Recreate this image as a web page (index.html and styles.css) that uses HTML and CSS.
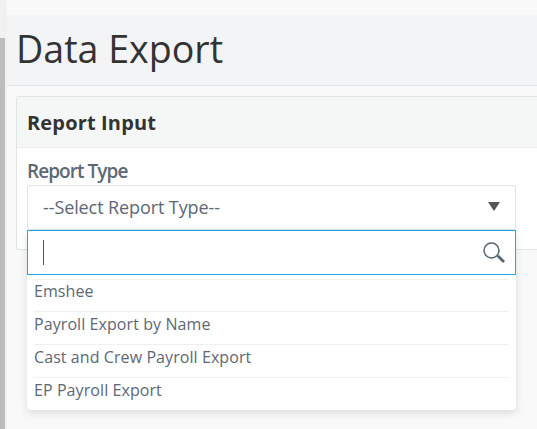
FILE: index.html
```html
<!DOCTYPE html>
<html lang="en">
<head>
    <meta charset="UTF-8">
    <meta name="viewport" content="width=device-width, initial-scale=1.0">
    <title>Data Export</title>
    <link rel="stylesheet" href="styles.css">
</head>
<body>

    <div class="scrollbar">
        <div class="scrollbar-thumb"></div>
    </div>

    <div class="main">
        <div class="top-bar"></div>

        <div class="page-header">
            <h1>Data Export</h1>
        </div>

        <div class="content">
            <div class="panel">
                <div class="panel-heading">Report Input</div>
                <div class="panel-body">
                    <label class="field-label">Report Type</label>
                    <div class="select-wrap">
                        <div class="select-box">
                            <span>--Select Report Type--</span>
                            <span class="select-arrow"></span>
                        </div>

                        <div class="dropdown">
                            <div class="search-box">
                                <span class="caret"></span>
                                <svg class="search-icon" width="24" height="24" viewBox="0 0 24 24">
                                    <circle cx="9.5" cy="9.5" r="7.5" fill="none" stroke="#56646f" stroke-width="1.5"/>
                                    <path d="M15 15l2-1 6 6-2 2-6-6z" fill="#56646f"/>
                                </svg>
                            </div>
                            <ul class="option-list">
                                <li>Emshee</li>
                                <li>Payroll Export by Name</li>
                                <li>Cast and Crew Payroll Export</li>
                                <li>EP Payroll Export</li>
                            </ul>
                        </div>
                    </div>
                </div>
            </div>
        </div>
    </div>

</body>
</html>
```

FILE: styles.css
```css
html, body {
    margin: 0;
    height: 100%;
    overflow: hidden;
}

body {
    display: flex;
    width: 537px;
    height: 429px;
    font-family: "Open Sans", sans-serif;
    background-color: #f9f9f9;
    color: #555;
}

.scrollbar {
    width: 7px;
    flex-shrink: 0;
    background-color: #f1f1f1;
}

.scrollbar-thumb {
    margin-top: 38px;
    width: 5px;
    height: 391px;
    background-color: #bdbdbd;
}

.main {
    flex: 1;
    min-width: 0;
}

.top-bar {
    height: 15px;
    background-color: #f9f9f9;
}

.page-header {
    height: 70px;
    background-color: #f3f4f6;
    border-bottom: 1px solid #e2e5e5;
}

h1 {
    margin: 0;
    padding-left: 9px;
    font-size: 37.6px;
    font-weight: 400;
    line-height: 68px;
    color: #333;
}

.content {
    padding: 10px 0 0 9px;
}

.panel {
    width: 540px;
    height: 152px;
    background-color: #fff;
    border: 1px solid #dfe5e5;
    border-right: none;
    border-radius: 3px 0 0 3px;
}

.panel-heading {
    height: 50px;
    padding-left: 10px;
    font-size: 20px;
    font-weight: 700;
    line-height: 51px;
    letter-spacing: 0.15px;
    color: #333;
    background-color: #f5f7f6;
    border-bottom: 1px solid #eeeeee;
}

.panel-body {
    padding: 11px 10px 0;
}

.field-label {
    display: block;
    font-size: 19px;
    font-weight: 600;
    line-height: 24px;
    margin-bottom: 2px;
    letter-spacing: -0.95px;
    color: #5d6874;
}

.select-wrap {
    position: relative;
    width: 489px;
}

.select-box {
    display: flex;
    justify-content: space-between;
    align-items: center;
    box-sizing: border-box;
    height: 45px;
    padding: 0 15px 2px;
    font-size: 18px;
    letter-spacing: -0.1px;
    color: #5d6874;
    background-color: #fff;
    border: 1px solid #e2e2e2;
    border-radius: 3px;
}

.select-arrow {
    width: 0;
    height: 0;
    border-left: 6px solid transparent;
    border-right: 6px solid transparent;
    border-top: 9px solid #555;
}

.dropdown {
    position: absolute;
    top: 45px;
    left: 0;
    width: 100%;
    background-color: #fff;
    border-radius: 0 0 4px 4px;
    box-shadow: 0 3px 8px rgba(0, 0, 0, 0.12);
}

.search-box {
    display: flex;
    justify-content: space-between;
    align-items: center;
    box-sizing: border-box;
    height: 45px;
    padding: 0 9px 0 15px;
    border: 1px solid #1fa9e8;
}

.caret {
    width: 1px;
    height: 25px;
    background-color: #555;
}

.option-list {
    margin: 0;
    padding: 4px 7px 0;
    list-style: none;
}

.option-list li {
    height: 32px;
    font-size: 16px;
    line-height: 25px;
    letter-spacing: 0.08px;
    color: #5d6874;
    border-top: 1px solid #f0f0f0;
}

.option-list li:first-child {
    height: 31px;
    line-height: 22px;
}
```
